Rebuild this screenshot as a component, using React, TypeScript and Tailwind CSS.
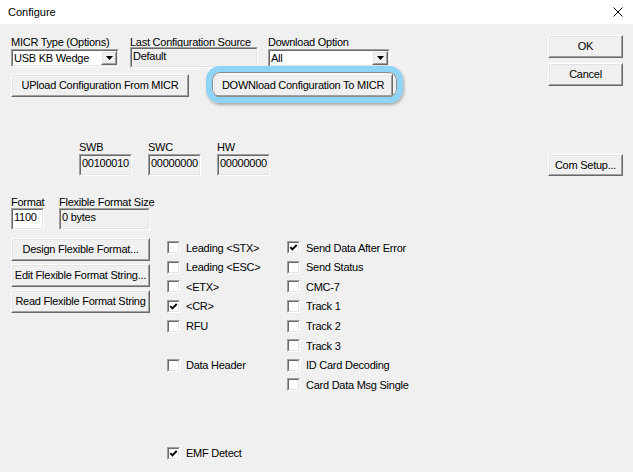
import type { ReactNode } from "react";

const font = { fontFamily: '"Liberation Sans", Arial, sans-serif' };

// classic 3D edges
const raisedOuter = "border border-t-white border-l-white border-r-[#696969] border-b-[#696969]";
const raisedInner = "border border-t-[#e3e3e3] border-l-[#e3e3e3] border-r-[#a0a0a0] border-b-[#a0a0a0]";
const sunkenOuter = "border border-t-[#a0a0a0] border-l-[#a0a0a0] border-r-white border-b-white";
const sunkenInner = "border border-t-[#696969] border-l-[#696969] border-r-[#e3e3e3] border-b-[#e3e3e3]";

function Button({ children, className = "" }: { children: ReactNode; className?: string }) {
  return (
    <div className={`${raisedOuter} bg-[#f0f0f0] ${className}`}>
      <div className={`${raisedInner} h-full flex items-center justify-center whitespace-nowrap`}>
        {children}
      </div>
    </div>
  );
}

function Field({ children, className = "", white = false }: { children?: ReactNode; className?: string; white?: boolean }) {
  return (
    <div className={`${sunkenOuter} ${className}`}>
      <div className={`${sunkenInner} h-full pl-[1px] pt-[1px] leading-[13px] ${white ? "bg-white" : "bg-[#f0f0f0]"}`}>
        {children}
      </div>
    </div>
  );
}

function Combo({ value, className = "" }: { value: string; className?: string }) {
  return (
    <div className={`${sunkenOuter} ${className}`}>
      <div className={`${sunkenInner} h-full flex bg-white`}>
        <div className="flex-1 pl-[1px] leading-[14px]">{value}</div>
        <div className={`${raisedOuter} w-[16px] h-full bg-[#f0f0f0]`}>
          <div className={`${raisedInner} h-full flex items-center justify-center`}>
            <svg width="7" height="4" viewBox="0 0 7 4">
              <path d="M0 0H7L3.5 4Z" fill="#000" />
            </svg>
          </div>
        </div>
      </div>
    </div>
  );
}

function Check({ label, checked = false }: { label: string; checked?: boolean }) {
  return (
    <div className="flex items-center h-full">
      <div className={`${sunkenOuter} w-[13px] h-[13px] shrink-0`}>
        <div className={`${sunkenInner} h-full bg-white flex items-center justify-center`}>
          {checked && (
            <svg width="9" height="9" viewBox="0 0 9 9">
              <path d="M1.3 4.2L3.4 6.4L7.7 2" fill="none" stroke="#000" strokeWidth="1.9" />
            </svg>
          )}
        </div>
      </div>
      <span className="ml-[6px] whitespace-nowrap">{label}</span>
    </div>
  );
}

function Label({ children }: { children: ReactNode }) {
  return <div className="h-[13px] leading-[13px] whitespace-nowrap">{children}</div>;
}

export default function App() {
  return (
    <div
      className="w-[633px] h-[472px] flex flex-col bg-[#f0f0f0] text-black text-[11px] tracking-[-0.25px] overflow-hidden"
      style={font}
    >
      {/* Title bar */}
      <div className="h-[24px] bg-white flex items-center justify-between pl-[8px] pr-[10px] shrink-0">
        <span className="text-[11px] tracking-normal">Configure</span>
        <svg width="10" height="10" viewBox="0 0 10 10">
          <path d="M0.5 0.5L9.5 9.5M9.5 0.5L0.5 9.5" stroke="#000" strokeWidth="1" />
        </svg>
      </div>

      <div className="flex flex-1">
        {/* Main area */}
        <div className="flex-1 pl-[11px] pt-[12px]">
          <div className="flex">
            <div className="w-[108px] flex flex-col">
              <Label>MICR Type (Options)</Label>
              <Combo value="USB KB Wedge" className="h-[18px]" />
            </div>
            <div className="w-[128px] ml-[11px] flex flex-col">
              <Label>Last Configuration Source</Label>
              <Field className="h-[21px] -mt-[2px]">Default</Field>
            </div>
            <div className="w-[122px] ml-[10px] flex flex-col">
              <Label>Download Option</Label>
              <Combo value="All" className="h-[18px]" />
            </div>
          </div>

          <div className="flex mt-[6px]">
            <Button className="w-[178px] h-[23px]">UPload Configuration From MICR</Button>
            <div className="relative ml-[24px]">
              <Button className="w-[180px] h-[23px]">DOWNload Configuration To MICR</Button>
              {/* highlight ring */}
              <div className="absolute -top-[8px] -left-[7px] -right-[10px] -bottom-[6px] rounded-[14px] border-[6px] border-[#8fd3f7] shadow-[inset_0_0_0_1px_#8c8c8c,1px_2px_3px_rgba(0,0,0,0.3)] pointer-events-none" />
            </div>
          </div>

          <div className="flex mt-[44px] ml-[68px] gap-[16px]">
            {[
              ["SWB", "00100010"],
              ["SWC", "00000000"],
              ["HW", "00000000"],
            ].map(([l, v]) => (
              <div key={l} className="w-[53px] flex flex-col">
                <Label>{l}</Label>
                <Field className="h-[22px]">{v}</Field>
              </div>
            ))}
          </div>

          <div className="flex mt-[20px]">
            <div className="w-[33px] flex flex-col">
              <div className="h-[12px] leading-[13px] whitespace-nowrap">Format</div>
              <Field white className="h-[22px]">1100</Field>
            </div>
            <div className="w-[91px] ml-[15px] flex flex-col">
              <div className="h-[12px] leading-[13px] whitespace-nowrap">Flexible Format Size</div>
              <Field className="h-[22px]">0 bytes</Field>
            </div>
          </div>

          <div className="flex mt-[8px]">
            <div className="w-[139px] flex flex-col gap-[3px]">
              <Button className="h-[23px]">Design Flexible Format...</Button>
              <Button className="h-[23px]">Edit Flexible Format String...</Button>
              <Button className="h-[23px]">Read Flexible Format String</Button>
            </div>
            <div className="ml-[17px] flex flex-col">
              <div className="grid grid-cols-[120px_auto] auto-rows-[19.6px]">
                <Check label="Leading <STX>" />
                <Check label="Send Data After Error" checked />
                <Check label="Leading <ESC>" />
                <Check label="Send Status" />
                <Check label="<ETX>" />
                <Check label="CMC-7" />
                <Check label="<CR>" checked />
                <Check label="Track 1" />
                <Check label="RFU" />
                <Check label="Track 2" />
                <div />
                <Check label="Track 3" />
                <Check label="Data Header" />
                <Check label="ID Card Decoding" />
                <div />
                <Check label="Card Data Msg Single" />
              </div>
              <div className="h-[19.6px] mt-[49px]">
                <Check label="EMF Detect" checked />
              </div>
            </div>
          </div>
        </div>

        {/* Right column */}
        <div className="w-[75px] mr-[10px] pt-[11px] flex flex-col">
          <Button className="h-[23px]">OK</Button>
          <Button className="h-[23px] mt-[5px]">Cancel</Button>
          <Button className="h-[22px] mt-[68px]">Com Setup...</Button>
        </div>
      </div>
    </div>
  );
}
